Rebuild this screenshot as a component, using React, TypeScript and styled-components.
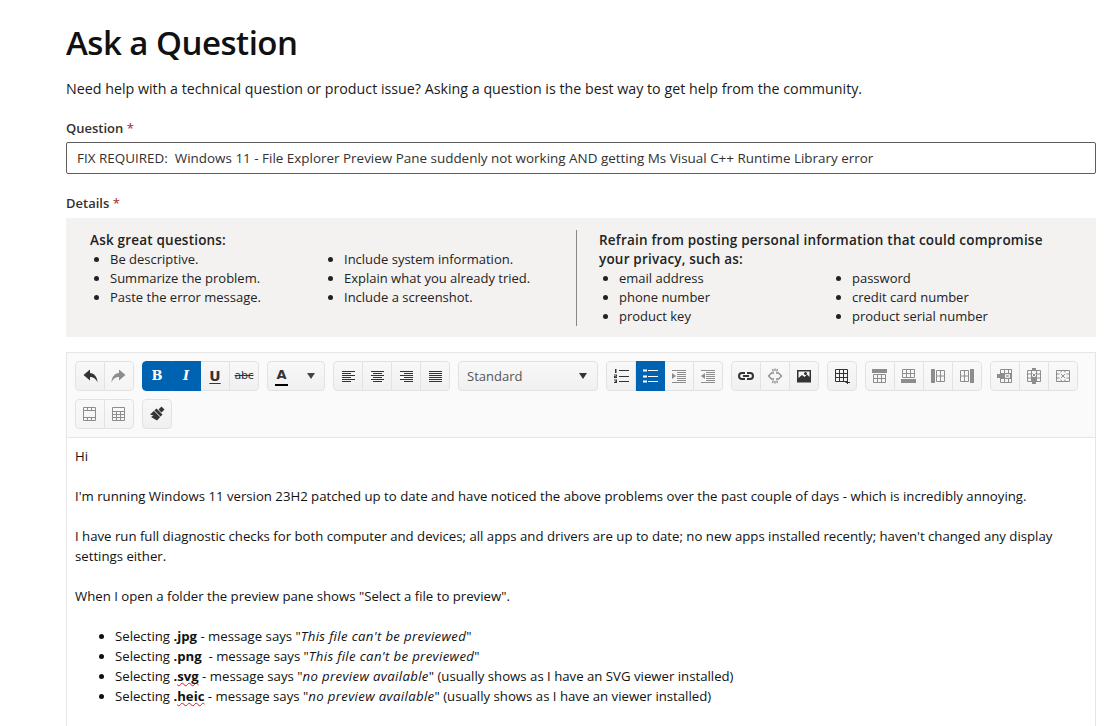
import React from 'react';
import styled, { createGlobalStyle } from 'styled-components';

const GlobalStyle = createGlobalStyle`
  html, body {
    margin: 0;
    padding: 0;
    height: 726px;
    overflow: hidden;
    background: #fff;
    color: #111;
    font-family: 'Open Sans', 'Noto Sans', sans-serif;
  }
  * { box-sizing: border-box; }
`;

const lines = (rows: [number, number, number][]) =>
  rows.map(([x, y, w]) => <rect key={`${x}-${y}`} x={x} y={y} width={w} height={1} fill="currentColor" />);

const icons: Record<string, React.ReactNode> = {
  undo: <path d="M8 1.500 1.500 7 8 12.500V9c3 0 6 1.500 7.500 5.500C15.500 9 12 5 8 5z" fill="currentColor" />,
  redo: <path d="M8 1.500 14.500 7 8 12.500V9c-3 0-6 1.500-7.500 5.500C.5 9 4 5 8 5z" fill="currentColor" />,
  left: lines([[2, 3, 13], [2, 5, 9], [2, 7, 13], [2, 9, 9], [2, 11, 13], [2, 13, 9]]),
  center: lines([[2, 3, 13], [4, 5, 9], [2, 7, 13], [4, 9, 9], [2, 11, 13], [4, 13, 9]]),
  right: lines([[2, 3, 13], [6, 5, 9], [2, 7, 13], [6, 9, 9], [2, 11, 13], [6, 13, 9]]),
  justify: lines([[2, 3, 13], [2, 5, 13], [2, 7, 13], [2, 9, 13], [2, 11, 13], [2, 13, 13]]),
  ol: (
    <>
      {lines([[6, 2, 10], [6, 8, 10], [6, 13, 10]])}
      <path d="M2 1h1.500v4H2zM1 6.500h3v2.200H2V9h2v1H1V8h2v-.5H1zM1 11.500h3V15H1v-1h2v-.3H2V13h1v-.5H1z" fill="currentColor" />
    </>
  ),
  ul: (
    <>
      {lines([[6, 2, 10], [6, 8, 10], [6, 13, 10]])}
      <path d="M1 1.500h4v2H1zM1 7.500h4v2H1zM1 12.500h4v2H1z" fill="currentColor" />
    </>
  ),
  indent: (
    <>
      {lines([[1, 2, 14], [6, 4, 9], [6, 6, 9], [6, 8, 9], [6, 10, 9], [6, 12, 9], [1, 14, 14]])}
      <path d="M1 5v6l4-3z" fill="currentColor" />
    </>
  ),
  outdent: (
    <>
      {lines([[1, 2, 14], [6, 4, 9], [6, 6, 9], [6, 8, 9], [6, 10, 9], [6, 12, 9], [1, 14, 14]])}
      <path d="M5 5v6L1 8z" fill="currentColor" />
    </>
  ),
  link: <path d="M7 5H4a3 3 0 0 0 0 6h3M9 5h3a3 3 0 0 1 0 6H9M5 8h6" fill="none" stroke="currentColor" strokeWidth="2" />,
  unlink: <path d="M7 5H4.500L1.500 8l3 3H7M9 5h2.500l3 3-3 3H9M5.500 1l.8 2.500M10.500 1l-.8 2.500M8 .5v2.500M5.500 15l.8-2.500M10.500 15l-.8-2.500M8 15.500V13" fill="none" stroke="currentColor" strokeWidth="1.300" />,
  image: (
    <>
      <path d="M1 2h14v12.500H1zM2.500 3.500V10l3.500-3 2.500 2 2.500-2.500 2.500 2.500V3.500z" fill="currentColor" fillRule="evenodd" />
      <circle cx="9.500" cy="5.500" r="1.500" fill="currentColor" />
    </>
  ),
  table: <path d="M1.500 1.500h12v12h-12zM1.500 5.500h12M1.500 9.500h12M5.500 1.500v12M9.500 1.500v12M11.500 14.500h4.500M13.500 12.500v3.500" fill="none" stroke="currentColor" strokeWidth="1" />,
  rowAbove: (
    <>
      <path d="M0 1h15v4H0z" fill="currentColor" />
      <path d="M1.500 6.500h12v8h-12zM1.500 10.500h12M5.500 6.500v8M9.500 6.500v8" fill="none" stroke="currentColor" />
    </>
  ),
  rowBelow: (
    <>
      <path d="M0 11h15v4H0z" fill="currentColor" />
      <path d="M1.500 1.500h12v8h-12zM1.500 5.500h12M5.500 1.500v8M9.500 1.500v8" fill="none" stroke="currentColor" />
    </>
  ),
  colLeft: (
    <>
      <path d="M1 1h4v14H1z" fill="currentColor" />
      <path d="M6.500 2.500h8v11h-8zM6.500 8h8M10.500 2.500v11" fill="none" stroke="currentColor" />
    </>
  ),
  colRight: (
    <>
      <path d="M11 1h4v14h-4z" fill="currentColor" />
      <path d="M1.500 2.500h8v11h-8zM1.500 8h8M5.500 2.500v11" fill="none" stroke="currentColor" />
    </>
  ),
  delRow: (
    <>
      <path d="M3.500 1.500h11v13h-11zM3.500 5.500h11M3.500 10.500h11M7.500 1.500v4M11.500 1.500v4M7.500 10.500v4M11.500 10.500v4M9 6.500l3 3M12 6.500l-3 3" fill="none" stroke="currentColor" />
      <path d="M0 6h8v4H0z" fill="currentColor" />
      <path d="M13 6h2v4h-2z" fill="currentColor" />
    </>
  ),
  delCol: (
    <>
      <path d="M1.500 2.500h13v11h-13zM1.500 6h4M1.500 10h4M10.500 6h4M10.500 10h4M5.500 2.500v11M10.500 2.500v11M6.500 5.500l3 3M9.500 5.500l-3 3" fill="none" stroke="currentColor" />
      <path d="M6 0h4v2H6zM6 9h4v7H6z" fill="currentColor" />
    </>
  ),
  merge: <path d="M1.500 2.500h13v11h-13zM1.500 6h3M1.500 10h3M11.500 6h3M11.500 10h3M6 2.500v2M10 2.500v2M6 11.500v2M10 11.500v2M6 6l4 4M10 6l-4 4" fill="none" stroke="currentColor" />,
  viewCell: <path d="M1.500 1.500h12v13h-12zM1.500 4.500h12M1.500 11.500h12M5.500 1.500v3M9.500 1.500v3M5.500 11.500v3M9.500 11.500v3" fill="none" stroke="currentColor" />,
  viewTable: <path d="M1.500 1.500h12v13h-12zM1.500 5.500h12M1.500 8.500h12M1.500 11.500h12M5.500 5.500v9M9.500 5.500v9" fill="none" stroke="currentColor" />,
  clean: (
    <>
      <path d="M9.500 3.500 12.500 .5 15.500 3.500 12.500 6.500zM7.500 2.500 13.500 8.500 8 14.500 2 11 4.500 9.500 1 8.500z" fill="currentColor" />
      <path d="M2 1.500 15 14.500" fill="none" stroke="#f4f4f4" strokeWidth="1" />
    </>
  ),
};

const glyphs: Record<string, string> = { bold: 'B', italic: 'I', underline: 'U', strike: 'abc' };

type ToolItem = { icon: string; state?: 'on' | 'off' };

const firstRow: ToolItem[][] = [
  [{ icon: 'undo' }, { icon: 'redo', state: 'off' }],
  [{ icon: 'bold', state: 'on' }, { icon: 'italic', state: 'on' }, { icon: 'underline' }, { icon: 'strike' }],
];
const alignRow: ToolItem[] = [{ icon: 'left' }, { icon: 'center' }, { icon: 'right' }, { icon: 'justify' }];
const afterSelect: ToolItem[][] = [
  [{ icon: 'ol' }, { icon: 'ul', state: 'on' }, { icon: 'indent', state: 'off' }, { icon: 'outdent', state: 'off' }],
  [{ icon: 'link' }, { icon: 'unlink', state: 'off' }, { icon: 'image' }],
  [{ icon: 'table' }],
  [
    { icon: 'rowAbove', state: 'off' },
    { icon: 'rowBelow', state: 'off' },
    { icon: 'colLeft', state: 'off' },
    { icon: 'colRight', state: 'off' },
  ],
  [{ icon: 'delRow', state: 'off' }, { icon: 'delCol', state: 'off' }, { icon: 'merge', state: 'off' }],
  [{ icon: 'viewCell', state: 'off' }, { icon: 'viewTable', state: 'off' }],
  [{ icon: 'clean' }],
];

const ToolGroup = ({ items }: { items: ToolItem[] }) => (
  <Group>
    {items.map((item) => (
      <ToolButton key={item.icon} $state={item.state}>
        {glyphs[item.icon] ? (
          <Glyph $kind={item.icon}>{glyphs[item.icon]}</Glyph>
        ) : (
          <svg width="16" height="16" viewBox="0 0 16 16">{icons[item.icon]}</svg>
        )}
      </ToolButton>
    ))}
  </Group>
);

const Caret = () => (
  <svg width="8" height="6" viewBox="0 0 8 6">
    <path d="M0 0h8L4 6z" fill="currentColor" />
  </svg>
);

const App = () => {
  return (
    <Page>
      <GlobalStyle />
      <Heading>Ask a Question</Heading>
      <Intro>
        Need help with a technical question or product issue? Asking a question is the best way to get help from the community.
      </Intro>
      <Label>
        Question <Star>*</Star>
      </Label>
      <TitleInput
        readOnly
        value="FIX REQUIRED:  Windows 11 - File Explorer Preview Pane suddenly not working AND getting Ms Visual C++ Runtime Library error"
      />
      <DetailsLabel>
        Details <Star>*</Star>
      </DetailsLabel>
      <Tips>
        <TipsLeft>
          <TipTitle>Ask great questions:</TipTitle>
          <TipColumns>
            <TipList>
              <li>Be descriptive.</li>
              <li>Summarize the problem.</li>
              <li>Paste the error message.</li>
            </TipList>
            <TipList>
              <li>Include system information.</li>
              <li>Explain what you already tried.</li>
              <li>Include a screenshot.</li>
            </TipList>
          </TipColumns>
        </TipsLeft>
        <TipsRight>
          <TipTitle>Refrain from posting personal information that could compromise your privacy, such as:</TipTitle>
          <TipColumnsRight>
            <TipList>
              <li>email address</li>
              <li>phone number</li>
              <li>product key</li>
            </TipList>
            <TipList>
              <li>password</li>
              <li>credit card number</li>
              <li>product serial number</li>
            </TipList>
          </TipColumnsRight>
        </TipsRight>
      </Tips>
      <Editor>
        <Toolbar>
          {firstRow.map((items) => (
            <ToolGroup key={items[0].icon} items={items} />
          ))}
          <ColorGroup>
            <ColorLetter>A</ColorLetter>
            <ColorCaret><Caret /></ColorCaret>
          </ColorGroup>
          <ToolGroup items={alignRow} />
          <FormatSelect>
            Standard
            <SelectCaret><Caret /></SelectCaret>
          </FormatSelect>
          {afterSelect.map((items) => (
            <ToolGroup key={items[0].icon} items={items} />
          ))}
        </Toolbar>
        <Body>
          <p>Hi</p>
          <p>I'm running Windows 11 version 23H2 patched up to date and have noticed the above problems over the past couple of days - which is incredibly annoying.</p>
          <p>I have run full diagnostic checks for both computer and devices; all apps and drivers are up to date; no new apps installed recently; haven't changed any display settings either.</p>
          <p>When I open a folder the preview pane shows "Select a file to preview".</p>
          <BodyList>
            <li>Selecting <b>.jpg</b> - message says "<i>This file can't be previewed</i>"</li>
            <li>Selecting <b>.png</b>&nbsp; - message says "<i>This file can't be previewed</i>"</li>
            <li>Selecting <b>.<Misspelt>svg</Misspelt></b> - message says "<i>no preview available</i>" (usually shows as I have an SVG viewer installed)</li>
            <li>Selecting <b>.<Misspelt>heic</Misspelt></b> - message says "<i>no preview available</i>" (usually shows as I have an viewer installed)</li>
          </BodyList>
        </Body>
      </Editor>
    </Page>
  );
};

const Page = styled.div`
  width: 1030px;
  margin-left: 66px;
  font-size: 14px;
`;

const Heading = styled.h1`
  margin: 0;
  padding-top: 22px;
  height: 68px;
  font-size: 33px;
  letter-spacing: -0.5px;
  line-height: 42px;
  font-weight: 600;
  color: #111;
`;

const Intro = styled.p`
  margin: 10px 0 0;
  font-size: 14.25px;
  line-height: 22px;
  color: #1a1a1a;
`;

const Label = styled.div`
  margin-top: 18px;
  font-size: 13px;
  line-height: 20px;
  font-weight: 600;
  color: #323130;
`;

const DetailsLabel = styled(Label)`
  margin-top: 19px;
`;

const Star = styled.span`
  color: #a4262c;
  font-weight: 400;
`;

const TitleInput = styled.input`
  display: block;
  width: 100%;
  height: 32px;
  margin-top: 4px;
  padding: 0 10px;
  border: 1px solid #605e5c;
  border-radius: 2px;
  font-family: inherit;
  font-size: 13.44px;
  color: #323130;
  outline: none;
`;

const Tips = styled.div`
  display: flex;
  height: 119px;
  margin-top: 5px;
  padding: 13px 24px 10px;
  background: #f3f2f1;
  font-size: 13px;
  line-height: 19px;
  color: #222;
`;

const TipsLeft = styled.div`
  width: 487px;
  height: 96px;
  margin-top: -1px;
  padding-top: 1px;
  border-right: 1px solid #8a8886;
`;

const TipsRight = styled.div`
  flex: 1;
  padding-left: 22px;
`;

const TipTitle = styled.div`
  font-size: 13.5px;
  letter-spacing: 0.2px;
  font-weight: 600;
  max-width: 455px;
`;

const TipColumns = styled.div`
  display: grid;
  grid-template-columns: 234px 1fr;
`;

const TipColumnsRight = styled.div`
  display: grid;
  grid-template-columns: 233px 1fr;
`;

const TipList = styled.ul`
  margin: 0;
  padding: 0 0 0 20px;
`;

const Editor = styled.div`
  margin-top: 15px;
  height: 500px;
  border: 1px solid #e6e6e6;
  border-bottom: none;
`;

const Toolbar = styled.div`
  display: flex;
  flex-wrap: wrap;
  align-content: flex-start;
  gap: 8px;
  height: 85px;
  padding: 8px;
  background: #fafafa;
  border-bottom: 1px solid #e6e6e6;
`;

const Group = styled.div`
  display: flex;
  height: 30px;
  border-radius: 4px;
  overflow: hidden;
`;

const buttonBorder = '#e2e2e2';

const ToolButton = styled.div<{ $state?: 'on' | 'off' }>`
  display: flex;
  align-items: center;
  justify-content: center;
  width: 29px;
  border: 1px solid ${(p) => (p.$state === 'on' ? '#0063b1' : buttonBorder)};
  border-left: none;
  color: ${(p) => (p.$state === 'on' ? '#fff' : p.$state === 'off' ? '#8d8d8d' : '#333')};
  background: ${(p) =>
    p.$state === 'on'
      ? '#0063b1'
      : p.$state === 'off'
        ? 'linear-gradient(#f9f9f9, #f4f4f4)'
        : 'linear-gradient(#f8f8f8, #f0f0f0)'};
  &:first-child {
    width: 30px;
    border-left: 1px solid ${(p) => (p.$state === 'on' ? '#0063b1' : buttonBorder)};
    border-radius: 4px 0 0 4px;
  }
  &:last-child {
    border-radius: 0 4px 4px 0;
  }
  &:only-child {
    border-radius: 4px;
  }
`;

const Glyph = styled.span<{ $kind: string }>`
  display: block;
  line-height: 16px;
  font-family: ${(p) => (p.$kind === 'bold' || p.$kind === 'italic' ? "'DejaVu Serif'" : "'DejaVu Sans'")}, serif;
  font-weight: ${(p) => (p.$kind === 'strike' ? 400 : 700)};
  font-style: ${(p) => (p.$kind === 'italic' ? 'italic' : 'normal')};
  font-size: ${(p) => (p.$kind === 'strike' ? '11px' : p.$kind === 'underline' ? '14px' : '13px')};
  text-decoration: ${(p) =>
    p.$kind === 'strike' ? 'line-through' : p.$kind === 'underline' ? 'underline' : 'none'};
  text-underline-offset: 2px;
  letter-spacing: ${(p) => (p.$kind === 'strike' ? '-0.3px' : '0')};
`;

const ColorGroup = styled.div`
  position: relative;
  display: flex;
  align-items: center;
  width: 58px;
  height: 30px;
  border: 1px solid ${buttonBorder};
  border-radius: 4px;
  background: linear-gradient(#f8f8f8, #f0f0f0);
  color: #333;
`;

const ColorLetter = styled.span`
  display: block;
  width: 13px;
  height: 19px;
  margin-left: 7px;
  border-bottom: 2px solid #000;
  font-family: 'DejaVu Sans', sans-serif;
  font-weight: 700;
  font-size: 13px;
  line-height: 15px;
  text-align: center;
`;

const ColorCaret = styled.span`
  display: flex;
  margin-left: 19px;
  color: #444;
`;

const FormatSelect = styled.div`
  display: flex;
  align-items: center;
  justify-content: space-between;
  width: 140px;
  height: 30px;
  padding: 0 10px 0 8px;
  border: 1px solid ${buttonBorder};
  border-radius: 4px;
  background: linear-gradient(#f8f8f8, #f0f0f0);
  font-size: 13px;
  color: #555;
`;

const SelectCaret = styled.span`
  display: flex;
  color: #333;
`;

const Body = styled.div`
  padding: 8px;
  background: #fff;
  font-size: 13.2px;
  line-height: 20px;
  color: #111;
  p {
    margin: 0 0 20px;
  }
  i {
    letter-spacing: 0.35px;
  }
`;

const BodyList = styled.ul`
  margin: 0;
  padding-left: 40px;
`;

const Misspelt = styled.span`
  text-decoration: underline wavy #e81123;
  text-decoration-thickness: 1px;
  text-decoration-skip-ink: none;
`;

export default App;
